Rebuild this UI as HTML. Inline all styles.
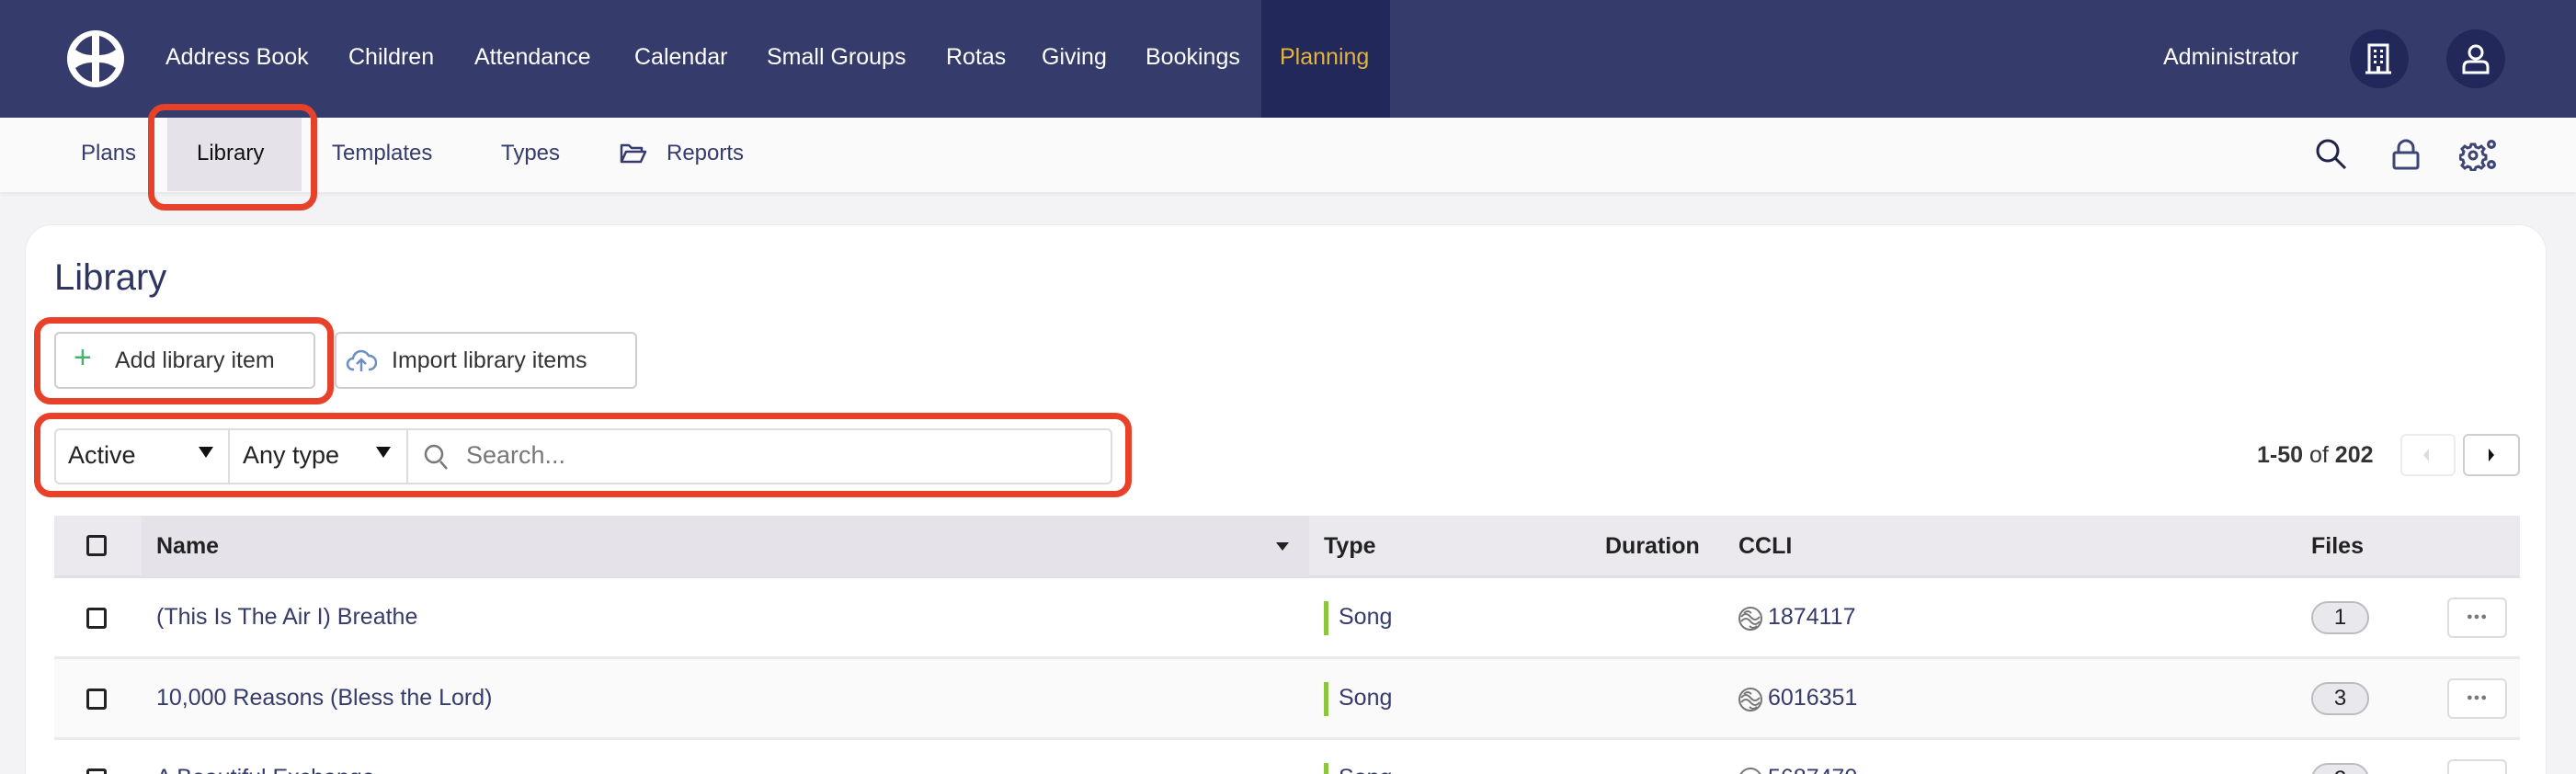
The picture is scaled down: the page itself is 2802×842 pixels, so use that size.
<!DOCTYPE html>
<html style="width:2802px;height:842px;overflow:hidden"><head><meta charset="utf-8">
<style>
*{box-sizing:border-box;margin:0;padding:0}
body{width:2802px;height:842px;overflow:hidden;background:#f3f2f4;font-family:"Liberation Sans","DejaVu Sans",sans-serif;position:relative}
.a{position:absolute;white-space:nowrap}
#top{left:0;top:0;width:2802px;height:128px;background:#353b6a}
.nv{color:#fff;font-size:25px;top:48px}
#sub{left:0;top:128px;width:2802px;height:81px;background:#fafafa;box-shadow:0 2px 4px rgba(0,0,0,.06)}
.sn{color:#353b6a;font-size:24px;top:153px}
#card{left:27px;top:244px;width:2743px;height:640px;background:#fff;border-radius:30px;border:1px solid #ebeaee}
.btn{border:2px solid #cfcdd3;border-radius:6px;background:#fff;height:62px;font-size:25px;color:#333;line-height:58px}
.red{border:7px solid #e8412a;border-radius:18px}
.hd{font-size:25px;color:#222;font-weight:bold;top:580px}
.cb{width:22px;height:23px;border:3px solid #222;border-radius:3px}
.nm{font-size:25px;color:#353b6a}
.row{left:59px;width:2682px;border-bottom:3px solid #ebe9ee}
.bar{width:5px;height:37px;background:#8cc63f}
.badge{width:63px;height:36px;border:2px solid #bdbbc2;border-radius:18px;background:#e9e8ec;text-align:center;font-size:24px;line-height:32px;color:#222}
.dots{width:65px;height:44px;border:2px solid #dcdbe0;border-radius:6px;background:#fff;text-align:center;font-size:11px;line-height:38px;color:#777;letter-spacing:1px}
</style></head><body>
<div id="top" class="a"></div>
<div class="a" style="left:1372px;top:0;width:140px;height:128px;background:#22285a"></div>
<svg class="a" style="left:70px;top:30px" width="68" height="68" viewBox="0 0 68 68"><circle cx="34" cy="34" r="31" fill="#fff"/><g fill="#353b6a"><path d="M30 9 Q18 12 12 24 Q20 30 30 30Z"/><path d="M38 9 Q50 12 56 24 Q48 30 38 30Z"/><path d="M30 59 Q18 56 12 44 Q20 38 30 38Z"/><path d="M38 59 Q50 56 56 44 Q48 38 38 38Z"/></g></svg>
<div class="a nv" style="left:180px">Address Book</div>
<div class="a nv" style="left:379px">Children</div>
<div class="a nv" style="left:516px">Attendance</div>
<div class="a nv" style="left:690px">Calendar</div>
<div class="a nv" style="left:834px">Small Groups</div>
<div class="a nv" style="left:1029px">Rotas</div>
<div class="a nv" style="left:1133px">Giving</div>
<div class="a nv" style="left:1246px">Bookings</div>
<div class="a nv" style="left:1392px;color:#e3b43b">Planning</div>
<div class="a nv" style="left:2353px">Administrator</div>
<div class="a" style="left:2556px;top:32px;width:64px;height:64px;border-radius:50%;background:#22285a"></div>
<svg class="a" style="left:2573px;top:47px" width="28" height="34" viewBox="0 0 28 34"><path d="M4 2h20v30H4z M0 32h28" fill="none" stroke="#fff" stroke-width="3"/><g fill="#fff"><rect x="9" y="7" width="3" height="3"/><rect x="16" y="7" width="3" height="3"/><rect x="9" y="13" width="3" height="3"/><rect x="16" y="13" width="3" height="3"/><rect x="9" y="19" width="3" height="3"/><rect x="16" y="19" width="3" height="3"/><rect x="12" y="25" width="4" height="7"/></g></svg>
<div class="a" style="left:2661px;top:32px;width:64px;height:64px;border-radius:50%;background:#22285a"></div>
<svg class="a" style="left:2677px;top:47px" width="32" height="34" viewBox="0 0 32 34"><circle cx="16" cy="10" r="7" fill="none" stroke="#fff" stroke-width="3"/><path d="M3 32v-6q0-6 6-6h14q6 0 6 6v6z" fill="none" stroke="#fff" stroke-width="3"/></svg>

<div id="sub" class="a"></div>
<div class="a" style="left:182px;top:128px;width:146px;height:80px;background:#e5e3e9"></div>
<div class="a sn" style="left:88px">Plans</div>
<div class="a sn" style="left:214px;color:#111">Library</div>
<div class="a sn" style="left:361px">Templates</div>
<div class="a sn" style="left:545px">Types</div>
<svg class="a" style="left:674px;top:155px" width="30" height="24" viewBox="0 0 30 24"><path d="M2 21V3h8l3 3h11v4 M2 21l5-11h21l-5 11z" fill="none" stroke="#353b6a" stroke-width="2.5" stroke-linejoin="round"/></svg>
<div class="a sn" style="left:725px">Reports</div>
<svg class="a" style="left:2518px;top:150px" width="36" height="36" viewBox="0 0 36 36"><circle cx="14" cy="14" r="11" fill="none" stroke="#1f2347" stroke-width="3"/><path d="M22 22l11 11" stroke="#1f2347" stroke-width="3"/></svg>
<svg class="a" style="left:2602px;top:151px" width="30" height="34" viewBox="0 0 30 34"><path d="M7 15V10a8 8 0 0 1 16 0v5" fill="none" stroke="#3d4577" stroke-width="3"/><rect x="2" y="15" width="26" height="17" rx="2" fill="none" stroke="#3d4577" stroke-width="3"/></svg>
<svg class="a" style="left:2675px;top:150px" width="44" height="36" viewBox="0 0 44 36"><g fill="none" stroke="#3d4577" stroke-width="3"><circle cx="15" cy="19" r="4"/><path d="M13 7h4l1 3 3 1 3-2 3 3-2 3 1 3 3 1v4l-3 1-1 3 2 3-3 3-3-2-3 1-1 3h-4l-1-3-3-1-3 2-3-3 2-3-1-3-3-1v-4l3-1 1-3-2-3 3-3 3 2 3-1z"/></g><g fill="#3d4577"><circle cx="35" cy="7" r="5"/><circle cx="35" cy="29" r="5"/></g><g fill="#fafafa"><circle cx="35" cy="7" r="1.8"/><circle cx="35" cy="29" r="1.8"/></g></svg>

<div id="card" class="a"></div>
<div class="a" style="left:59px;top:280px;font-size:40px;color:#2e3561">Library</div>
<div class="a btn" style="left:59px;top:361px;width:284px;padding-left:64px">Add library item</div>
<div class="a" style="left:80px;top:370px;font-size:34px;color:#4caf72">+</div>
<div class="a btn" style="left:364px;top:361px;width:329px;padding-left:60px">Import library items</div>
<svg class="a" style="left:376px;top:378px" width="34" height="28" viewBox="0 0 34 28"><path d="M9 24H8a6 6 0 0 1 0-12 9 9 0 0 1 17-3 7 7 0 0 1 1 15h-1" fill="none" stroke="#6d8fc4" stroke-width="2.5"/><path d="M17 26V13m-5 5 5-5 5 5" fill="none" stroke="#6d8fc4" stroke-width="2.5"/></svg>

<div class="a" style="left:59px;top:466px;width:1151px;height:61px;border:2px solid #dedce2;border-radius:6px"></div>
<div class="a" style="left:248px;top:466px;width:2px;height:61px;background:#dedce2"></div>
<div class="a" style="left:442px;top:466px;width:2px;height:61px;background:#dedce2"></div>
<div class="a" style="left:74px;top:480px;font-size:27px;color:#222">Active</div>
<div class="a" style="left:216px;top:486px;width:0;height:0;border-left:8px solid transparent;border-right:8px solid transparent;border-top:12px solid #111"></div>
<div class="a" style="left:264px;top:480px;font-size:27px;color:#222">Any type</div>
<div class="a" style="left:409px;top:486px;width:0;height:0;border-left:8px solid transparent;border-right:8px solid transparent;border-top:12px solid #111"></div>
<svg class="a" style="left:460px;top:482px" width="30" height="32" viewBox="0 0 30 32"><circle cx="12" cy="12" r="9" fill="none" stroke="#777" stroke-width="2.5"/><path d="M19 20l7 8" stroke="#777" stroke-width="2.5"/></svg>
<div class="a" style="left:507px;top:480px;font-size:27px;color:#777">Search...</div>

<div class="a" style="left:2455px;top:481px;font-size:25px;color:#333"><b>1-50</b> of <b>202</b></div>
<div class="a" style="left:2611px;top:472px;width:60px;height:46px;border:2px solid #eceaef;border-radius:6px"></div>
<div class="a" style="left:2636px;top:488px;border-top:7px solid transparent;border-bottom:7px solid transparent;border-right:6px solid #ddd"></div>
<div class="a" style="left:2679px;top:472px;width:62px;height:46px;border:2px solid #cfcdd3;border-radius:6px"></div>
<div class="a" style="left:2707px;top:488px;border-top:7px solid transparent;border-bottom:7px solid transparent;border-left:6px solid #111"></div>

<div class="a" style="left:59px;top:561px;width:2682px;height:68px;background:#ebe9ee;border-bottom:3px solid #e2e0e6"></div>
<div class="a" style="left:154px;top:561px;width:1270px;height:66px;background:#e5e3e9"></div>
<div class="a cb" style="left:94px;top:582px"></div>
<div class="a hd" style="left:170px">Name</div>
<div class="a" style="left:1388px;top:590px;border-left:7px solid transparent;border-right:7px solid transparent;border-top:9px solid #222"></div>
<div class="a hd" style="left:1440px">Type</div>
<div class="a hd" style="left:1746px">Duration</div>
<div class="a hd" style="left:1891px">CCLI</div>
<div class="a hd" style="left:2514px">Files</div>

<div class="a row" style="top:629px;height:88px;background:#fff"></div>
<div class="a row" style="top:717px;height:88px;background:#fafafa"></div>

<div class="a cb" style="left:94px;top:661px"></div>
<div class="a nm" style="left:170px;top:657px">(This Is The Air I) Breathe</div>
<div class="a bar" style="left:1440px;top:654px"></div>
<div class="a nm" style="left:1456px;top:657px">Song</div>
<svg class="a" style="left:1890px;top:659px" width="28" height="28" viewBox="0 0 28 28"><g fill="none" stroke="#777" stroke-width="2"><circle cx="14" cy="14" r="12"/><path d="M4 12q5-6 10 0t10 0M4 17q5-6 10 0t10 0M7 8q4-4 8 0M13 22q4 4 8 0"/></g></svg>
<div class="a nm" style="left:1923px;top:657px">1874117</div>
<div class="a badge" style="left:2514px;top:654px">1</div>
<div class="a dots" style="left:2662px;top:650px">●●●</div>

<div class="a cb" style="left:94px;top:749px"></div>
<div class="a nm" style="left:170px;top:745px">10,000 Reasons (Bless the Lord)</div>
<div class="a bar" style="left:1440px;top:742px"></div>
<div class="a nm" style="left:1456px;top:745px">Song</div>
<svg class="a" style="left:1890px;top:747px" width="28" height="28" viewBox="0 0 28 28"><g fill="none" stroke="#777" stroke-width="2"><circle cx="14" cy="14" r="12"/><path d="M4 12q5-6 10 0t10 0M4 17q5-6 10 0t10 0M7 8q4-4 8 0M13 22q4 4 8 0"/></g></svg>
<div class="a nm" style="left:1923px;top:745px">6016351</div>
<div class="a badge" style="left:2514px;top:742px">3</div>
<div class="a dots" style="left:2662px;top:738px">●●●</div>

<div class="a cb" style="left:94px;top:836px"></div>
<div class="a nm" style="left:170px;top:832px">A Beautiful Exchange</div>
<div class="a bar" style="left:1440px;top:830px"></div>
<div class="a nm" style="left:1456px;top:832px">Song</div>
<svg class="a" style="left:1890px;top:834px" width="28" height="28" viewBox="0 0 28 28"><g fill="none" stroke="#777" stroke-width="2"><circle cx="14" cy="14" r="12"/></g></svg>
<div class="a nm" style="left:1923px;top:832px">5687470</div>
<div class="a badge" style="left:2514px;top:830px">2</div>
<div class="a dots" style="left:2662px;top:826px">●●●</div>

<div class="a red" style="left:161px;top:113px;width:184px;height:116px"></div>
<div class="a red" style="left:37px;top:345px;width:326px;height:95px"></div>
<div class="a red" style="left:37px;top:449px;width:1194px;height:92px"></div>
</body></html>
